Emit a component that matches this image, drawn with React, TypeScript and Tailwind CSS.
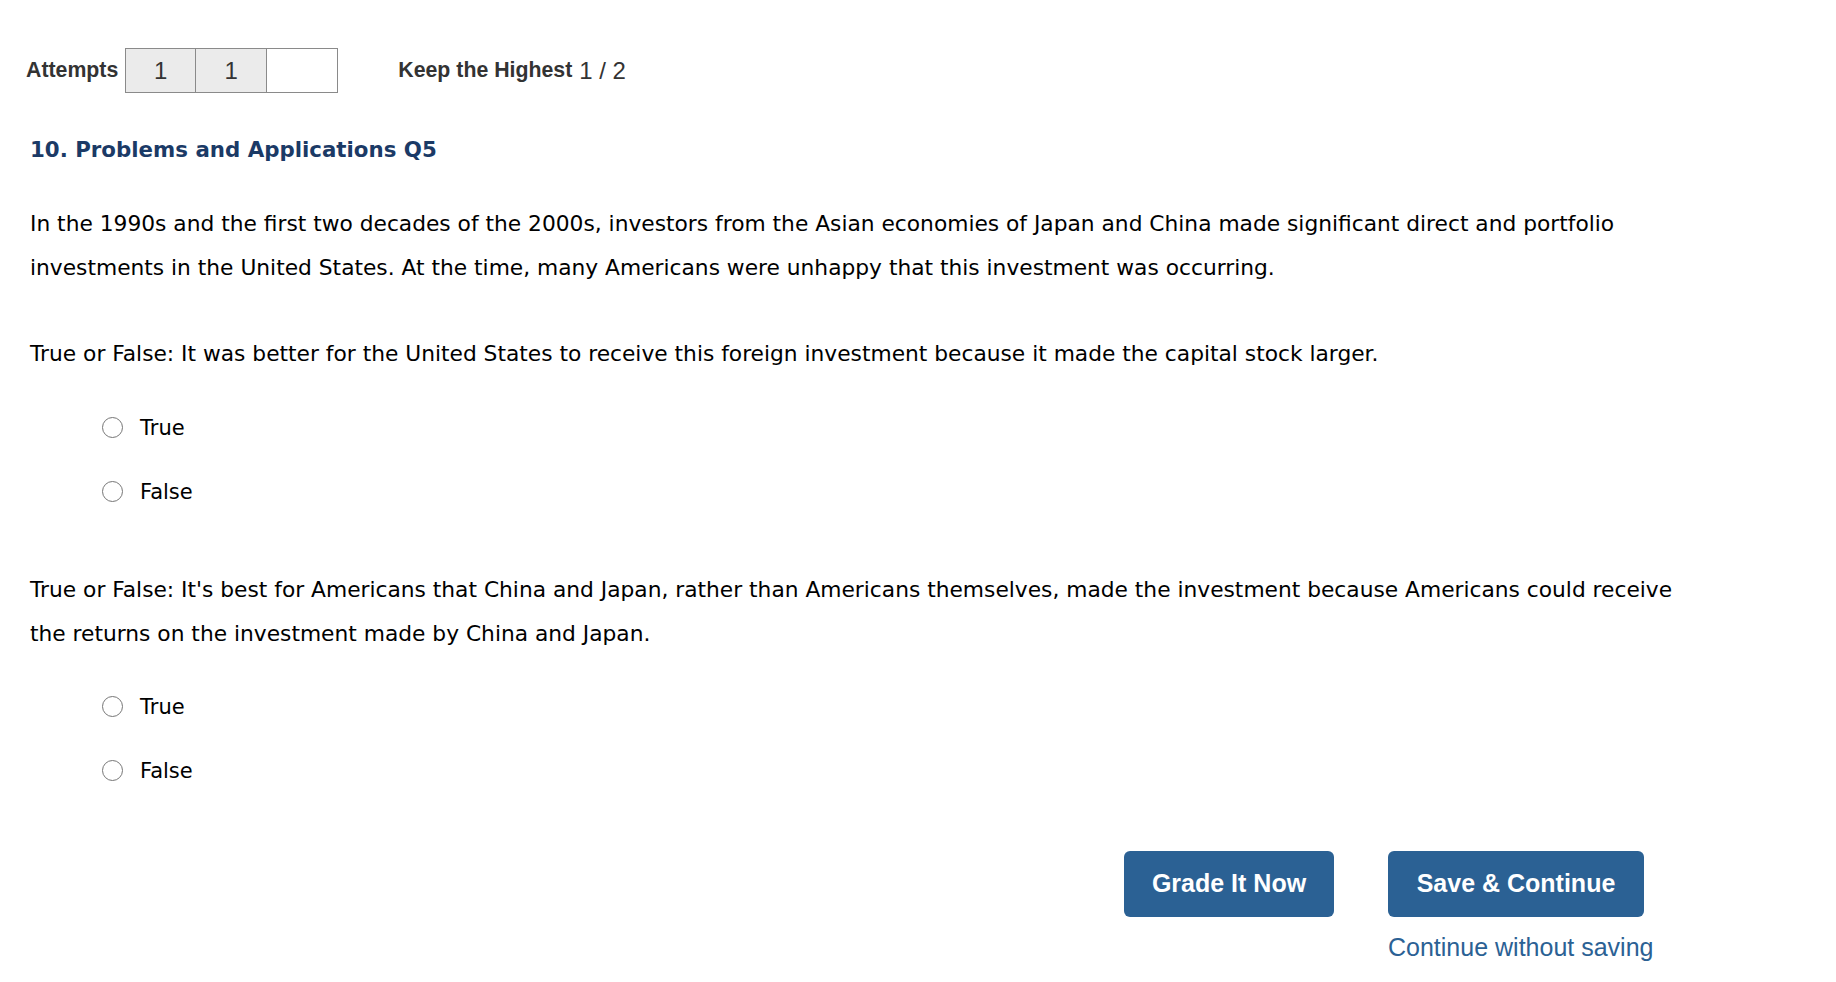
import React from 'react';

const bodyFont = { fontFamily: '"DejaVu Sans", Verdana, sans-serif' };

const Radio = ({ label }: { label: string }) => (
  <label className="flex items-center h-[44px] pl-[102px] cursor-pointer">
    <span className="w-[21px] h-[21px] mb-[3px] rounded-full border-[1.5px] border-[#767676] bg-white shrink-0" />
    <span className="ml-[17px] text-[21px] text-black">{label}</span>
  </label>
);

export default function App() {
  return (
    <div className="min-h-screen bg-white text-black font-['Liberation_Sans',Arial,sans-serif]">
      {/* attempts row */}
      <div className="flex items-center pt-[48px] pl-[26px] h-[93px]">
        <span className="text-[21.3px] font-bold text-[#333] mr-[7px]">Attempts</span>
        <div className="flex h-[45px]">
          <div className="w-[71px] h-full flex items-center justify-center bg-[#ebebeb] border border-[#8a8a8a] text-[24px] text-[#333]">1</div>
          <div className="w-[71px] h-full flex items-center justify-center bg-[#ebebeb] border border-l-0 border-[#8a8a8a] text-[24px] text-[#333]">1</div>
          <div className="w-[71px] h-full flex items-center justify-center bg-white border border-l-0 border-[#8a8a8a]" />
        </div>
        <span className="ml-[60px] text-[21.3px] font-bold text-[#333]">Keep the Highest</span>
        <span className="ml-[7px] text-[24px] text-[#333]">1 / 2</span>
      </div>

      <div className="pl-[30px]" style={bodyFont}>
        <h2 className="mt-[43px] h-[28px] leading-[28px] text-[21.33px] font-bold text-[#1b3a66]">
          10. Problems and Applications Q5
        </h2>

        <p className="mt-[38px] text-[21.75px] leading-[44px]">
          In the 1990s and the first two decades of the 2000s, investors from the Asian economies of Japan and China made significant direct and portfolio
          <br />
          investments in the United States. At the time, many Americans were unhappy that this investment was occurring.
        </p>

        <p className="mt-[42px] text-[21.75px] leading-[44px]">
          True or False: It was better for the United States to receive this foreign investment because it made the capital stock larger.
        </p>
      </div>

      <div className="mt-[31px]" style={bodyFont}>
        <Radio label="True" />
        <div className="mt-[20px]">
          <Radio label="False" />
        </div>
      </div>

      <div className="pl-[30px]" style={bodyFont}>
        <p className="mt-[53px] text-[21.75px] leading-[44px]">
          True or False: It's best for Americans that China and Japan, rather than Americans themselves, made the investment because Americans could receive
          <br />
          the returns on the investment made by China and Japan.
        </p>
      </div>

      <div className="mt-[30px]" style={bodyFont}>
        <Radio label="True" />
        <div className="mt-[20px]">
          <Radio label="False" />
        </div>
      </div>

      {/* actions */}
      <div className="mt-[57px] w-[1658px] flex justify-end items-start gap-[54px]">
        <button className="w-[210px] h-[66px] rounded-[6px] bg-[#2b6194] text-white text-[25px] font-bold">
          Grade It Now
        </button>
        <div className="flex flex-col items-start w-[270px]">
          <button className="w-[256px] h-[66px] rounded-[6px] bg-[#2b6194] text-white text-[25px] font-bold">
            Save &amp; Continue
          </button>
          <a href="#" className="mt-[15px] leading-[30px] text-[25px] text-[#2b6194] whitespace-nowrap">
            Continue without saving
          </a>
        </div>
      </div>
    </div>
  );
}
